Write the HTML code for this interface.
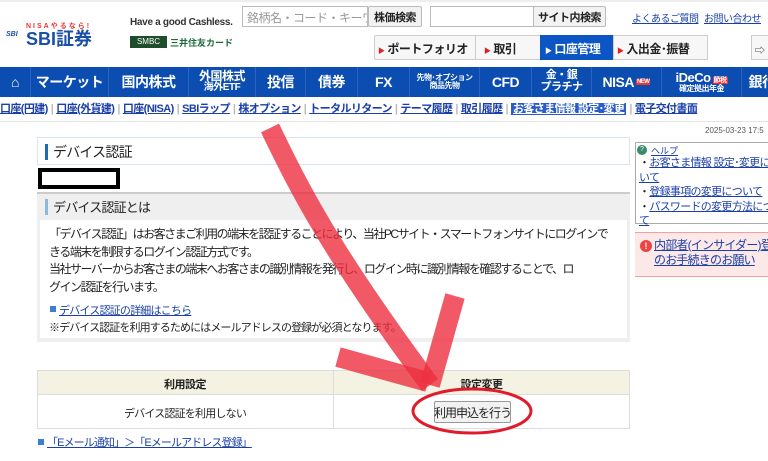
<!DOCTYPE html>
<html><head><meta charset="utf-8"><style>
*{margin:0;padding:0;box-sizing:border-box}
body{width:768px;height:461px;overflow:hidden;background:#fff;font-family:"Liberation Sans","Noto Sans CJK JP",sans-serif;font-size:11px;color:#222;position:relative}
.a{position:absolute;white-space:nowrap}
a,.lk{color:#1a3fa8;text-decoration:underline}
.btn{position:absolute;border:1px solid #bbb;background:#f2f2f2;border-radius:2px;font-size:11px;font-weight:bold;display:flex;align-items:center;justify-content:center;white-space:nowrap;letter-spacing:-0.5px}
.nav{position:absolute;left:0;top:67px;width:768px;height:30px;background:#0b4db0;color:#fff;font-weight:bold;font-size:14px;white-space:nowrap;letter-spacing:-0.5px}
.nav div{position:absolute;top:0;height:30px;display:flex;flex-direction:column;align-items:center;justify-content:center;border-right:1px solid #2a62c0;text-align:center;line-height:1.05;white-space:nowrap}
.sm{font-size:10px}
.sub{position:absolute;top:100px;left:0;font-size:11px;font-weight:bold;white-space:nowrap;letter-spacing:-0.6px}
.sub span{color:#1a3fa8;text-decoration:underline;margin-right:3px}
.sub i{color:#bbb;font-style:normal;margin-right:3px}
.tab{position:absolute;top:40px;font-size:12px;font-weight:bold;letter-spacing:-0.5px;white-space:nowrap}
</style></head><body>
<div class="a" style="left:0;top:0;width:768px;height:2px;background:#eee"></div>
<div class="a" style="left:26px;top:21px;font-size:7px;color:#e33;letter-spacing:2px;font-weight:bold">NISAやるなら!</div>
<div class="a" style="left:6px;top:31px;font-size:7px;color:#1a4fa8;font-weight:bold;font-style:italic">SBI</div>
<div class="a" style="left:26px;top:25px;font-size:18px;color:#1a4fa8;font-weight:bold">SBI証券</div>
<div class="a" style="left:130px;top:17px;font-size:10px;font-weight:bold;color:#333;letter-spacing:-0.3px">Have a good Cashless.</div>
<div class="a" style="left:130px;top:36px;width:37px;height:12px;background:#1e4d2b;color:#fff;font-size:8px;line-height:12px;text-align:center">SMBC</div>
<div class="a" style="left:170px;top:36px;font-size:9px;color:#1e6b3b;font-weight:bold">三井住友カード</div>
<div class="a" style="left:242px;top:6px;width:126px;height:21px;border:1px solid #bbb;color:#999;font-size:12px;padding:2px 4px;overflow:hidden;letter-spacing:-0.5px">銘柄名・コード・キーワ</div>
<div class="btn" style="left:368px;top:6px;width:54px;height:21px">株価検索</div>
<div class="a" style="left:430px;top:6px;width:104px;height:21px;border:1px solid #bbb"></div>
<div class="btn" style="left:533px;top:6px;width:73px;height:21px">サイト内検索</div>
<div class="a lk" style="left:632px;top:10px;font-size:10px;letter-spacing:-0.5px">よくあるご質問</div>
<div class="a lk" style="left:704px;top:10px;font-size:10px;letter-spacing:-0.5px">お問い合わせ</div>
<div class="a" style="left:374px;top:35px;width:250px;height:25px;border:1px solid #ccc;background:#f7f7f7;border-radius:2px"></div>
<div class="tab" style="left:378px"><span style="color:#d22;font-size:7px">▶</span> ポートフォリオ</div>
<div class="a" style="left:475px;top:35px;width:1px;height:25px;background:#ccc"></div>
<div class="tab" style="left:484px"><span style="color:#d22;font-size:7px">▶</span> 取引</div>
<div class="a" style="left:540px;top:35px;width:73px;height:25px;background:#0b56c4"></div>
<div class="tab" style="left:545px;color:#fff"><span style="font-size:7px">▶</span> 口座管理</div>
<div class="a" style="left:613px;top:35px;width:95px;height:25px;border:1px solid #ccc;background:#f7f7f7"></div>
<div class="tab" style="left:617px"><span style="color:#d22;font-size:7px">▶</span> 入出金･振替</div>
<div class="a" style="left:751px;top:35px;width:20px;height:25px;border:1px solid #ccc;background:#f7f7f7;font-size:10px;padding:6px 3px">⇨</div>
<div class="nav">
<div style="left:0;width:31px">⌂</div>
<div style="left:31px;width:78px">マーケット</div>
<div style="left:109px;width:80px">国内株式</div>
<div style="left:189px;width:67px;font-size:12px"><span>外国株式</span><span class="sm">海外ETF</span></div>
<div style="left:256px;width:50px">投信</div>
<div style="left:306px;width:52px">債券</div>
<div style="left:358px;width:52px">FX</div>
<div style="left:410px;width:70px;font-size:8px"><span>先物･オプション</span><span>商品先物</span></div>
<div style="left:480px;width:52px">CFD</div>
<div style="left:532px;width:60px;font-size:11px"><span>金・銀</span><span>プラチナ</span></div>
<div style="left:592px;width:70px;flex-direction:row">NISA<span style="background:#e33;font-size:6px;padding:0 1px;margin-left:2px">NEW</span></div>
<div style="left:662px;width:80px;font-size:13px"><span>iDeCo<span style="background:#e33;font-size:7px;padding:0 1px;margin-left:2px">節税</span></span><span style="font-size:8px">確定拠出年金</span></div>
<div style="left:742px;width:40px;border:none">銀行</div>
</div>
<div class="sub"><span>口座(円建)</span><i>|</i><span>口座(外貨建)</span><i>|</i><span>口座(NISA)</span><i>|</i><span>SBIラップ</span><i>|</i><span>株オプション</span><i>|</i><span>トータルリターン</span><i>|</i><span>テーマ履歴</span><i>|</i><span>取引履歴</span><i>|</i><span style="background:#2a5cc7;color:#fff;padding:0 2px">お客さま情報 設定･変更</span><i>|</i><span>電子交付書面</span></div>
<div class="a" style="left:0;top:121px;width:768px;height:1px;background:#e5e5e5"></div>
<div class="a" style="left:705px;top:126px;font-size:8px;color:#555">2025-03-23 17:5</div>
<div class="a" style="left:37px;top:137px;width:593px;height:28px;border:1px solid #d8e4f0;background:#fff"></div>
<div class="a" style="left:45px;top:144px;width:3px;height:16px;background:#1a6bb8"></div>
<div class="a" style="left:53px;top:142px;font-size:14px;letter-spacing:-0.8px">デバイス認証</div>
<div class="a" style="left:38px;top:168px;width:82px;height:21px;border:4px solid #000"></div>
<div class="a" style="left:37px;top:192px;width:593px;height:150px;background:#efefef;border-top:2px solid #ccc"></div>
<div class="a" style="left:45px;top:199px;width:3px;height:16px;background:#8fb8dd"></div>
<div class="a" style="left:53px;top:197px;font-size:13px;letter-spacing:-0.8px">デバイス認証とは</div>
<div class="a" style="left:40px;top:220px;width:587px;height:118px;background:#fff"></div>
<div class="a" style="left:49px;top:226px;font-size:12px;line-height:17.5px;letter-spacing:-1.5px">「デバイス認証」はお客さまご利用の端末を認証することにより、当社PCサイト・スマートフォンサイトにログインで<br>きる端末を制限するログイン認証方式です。<br>当社サーバーからお客さまの端末へお客さまの識別情報を発行し、ログイン時に識別情報を確認することで、ロ<br>グイン認証を行います。</div>
<div class="a" style="left:50px;top:306px;width:6px;height:6px;background:#3a7fd0"></div>
<div class="a lk" style="left:59px;top:302px;font-size:11px;letter-spacing:-0.8px">デバイス認証の詳細はこちら</div>
<div class="a" style="left:49px;top:319px;font-size:11px;letter-spacing:-0.9px">※デバイス認証を利用するためにはメールアドレスの登録が必須となります。</div>
<div class="a" style="left:37px;top:370px;width:593px;height:59px;border:1px solid #ddd"></div>
<div class="a" style="left:38px;top:371px;width:591px;height:24px;background:#f4f2e2;border-bottom:1px solid #ddd"></div>
<div class="a" style="left:333px;top:371px;width:1px;height:57px;background:#ddd"></div>
<div class="a" style="left:37px;top:376px;width:296px;text-align:center;font-weight:bold;letter-spacing:-0.5px">利用設定</div>
<div class="a" style="left:333px;top:376px;width:297px;text-align:center;font-weight:bold;letter-spacing:-0.5px">設定変更</div>
<div class="a" style="left:37px;top:405px;width:296px;text-align:center;letter-spacing:-0.8px">デバイス認証を利用しない</div>
<div class="btn" style="left:434px;top:401px;width:77px;height:22px;font-weight:normal;font-size:12px;border-color:#999;letter-spacing:-1px">利用申込を行う</div>
<div class="a" style="left:38px;top:439px;width:6px;height:6px;background:#3a7fd0"></div>
<div class="a lk" style="left:47px;top:434px;font-size:11px;letter-spacing:-0.9px">「Eメール通知」＞「Eメールアドレス登録」</div>
<div class="a" style="left:635px;top:142px;width:140px;height:82px;border:1px solid #aaa"></div>
<div class="a" style="left:637px;top:145px;width:10px;height:10px;border-radius:50%;background:#3a8a6a;color:#fff;font-size:7px;text-align:center;line-height:10px">?</div>
<div class="a lk" style="left:651px;top:144px;font-size:9px">ヘルプ</div>
<div class="a" style="left:639px;top:156px;font-size:11px;line-height:14.5px;letter-spacing:-0.7px">・<span class="lk">お客さま情報 設定･変更に</span><br><span class="lk">いて</span><br>・<span class="lk">登録事項の変更について</span><br>・<span class="lk">パスワードの変更方法につ</span><br><span class="lk">て</span></div>
<div class="a" style="left:635px;top:232px;width:140px;height:45px;background:#fde8e8;border-top:1px solid #f3a0a0;border-bottom:1px solid #f3a0a0"></div>
<div class="a" style="left:640px;top:240px;width:12px;height:12px;border-radius:50%;background:#e44;color:#fff;font-size:9px;text-align:center;line-height:12px;font-weight:bold">!</div>
<div class="a lk" style="left:654px;top:238px;font-size:12px;line-height:15px;letter-spacing:-0.8px">内部者(インサイダー)登<br>のお手続きのお願い</div>
<svg class="a" style="left:0;top:0" width="768" height="461">
<g stroke="#ee3040" stroke-opacity="0.8" stroke-width="20" fill="none">
<path d="M270 128 C300 190 330 250 430 385"/>
<path d="M338 357 L428 382"/>
<path d="M455 296 L430 385"/>
</g>
<ellipse cx="472" cy="411" rx="59" ry="22" fill="none" stroke="#e21b2b" stroke-width="3"/>
</svg>
</body></html>
